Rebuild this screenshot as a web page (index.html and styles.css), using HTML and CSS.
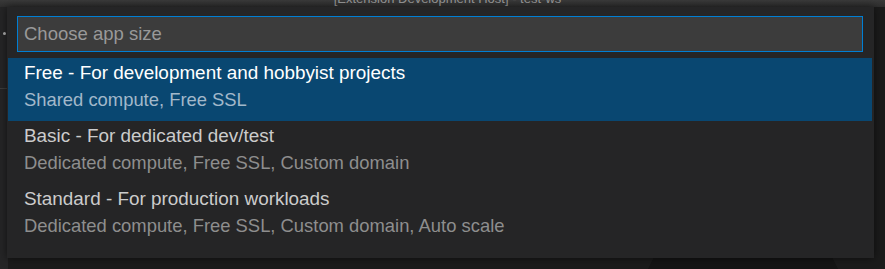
FILE: index.html
```html
<!DOCTYPE html>
<html lang="en">
<head>
    <meta charset="UTF-8">
    <meta name="viewport" content="width=device-width, initial-scale=1.0">
    <title>Choose app size</title>
    <link rel="stylesheet" href="styles.css">
</head>
<body>
    <header class="titlebar">
        <span class="title">[Extension Development Host] - test-ws</span>
    </header>
    <div class="workbench">
        <aside class="sidebar">
            <span class="dot"></span>
            <span class="sash"></span>
        </aside>
        <main class="editor">
            <div class="tab-shadow"></div>
        </main>
    </div>

    <div class="quick-input">
        <div class="input-box">
            <input type="text" placeholder="Choose app size">
        </div>
        <ul class="pick-list">
            <li class="pick selected">
                <div class="label">Free - For development and hobbyist projects</div>
                <div class="detail">Shared compute, Free SSL</div>
            </li>
            <li class="pick">
                <div class="label">Basic - For dedicated dev/test</div>
                <div class="detail">Dedicated compute, Free SSL, Custom domain</div>
            </li>
            <li class="pick">
                <div class="label">Standard - For production workloads</div>
                <div class="detail">Dedicated compute, Free SSL, Custom domain, Auto scale</div>
            </li>
        </ul>
    </div>
</body>
</html>
```

FILE: styles.css
```css
body {
    margin: 0;
    padding: 0;
    width: 885px;
    height: 269px;
    overflow: hidden;
    background-color: #1b1b1b;
    font-family: "Liberation Sans", Arial, sans-serif;
}

.titlebar {
    height: 7px;
    overflow: hidden;
    background: linear-gradient(#3a3a3a, #2e2e2e);
    display: flex;
    justify-content: center;
    align-items: flex-end;
}

.title {
    color: #9a9a9a;
    font-size: 13px;
    line-height: 13px;
    margin-bottom: 2px;
    margin-left: 10px;
}

.workbench {
    display: flex;
    height: 262px;
}

.sidebar {
    width: 8px;
    background-color: #252526;
    position: relative;
}

.sidebar .dot {
    position: absolute;
    left: 3px;
    top: 25px;
    width: 3px;
    height: 3px;
    border-radius: 50%;
    background-color: #b0b0b0;
}

.sidebar .sash {
    position: absolute;
    left: 0;
    top: 81px;
    width: 8px;
    height: 1px;
    background-color: #3c3c3c;
}

.editor {
    flex: 1;
    background-color: #1b1b1b;
    position: relative;
}

.tab-shadow {
    position: absolute;
    left: 640px;
    bottom: 0;
    width: 190px;
    height: 12px;
    background-color: #151515;
    clip-path: polygon(6px 0, 184px 0, 190px 100%, 0 100%);
}

.quick-input {
    position: absolute;
    left: 7px;
    top: 7px;
    width: 867px;
    height: 251px;
    box-sizing: border-box;
    background-color: #252526;
    box-shadow: 0 0 8px rgba(0, 0, 0, 0.55);
    padding-top: 9px;
}

.input-box {
    margin: 0 11px 0 10px;
}

.input-box input {
    display: block;
    width: 100%;
    height: 36px;
    box-sizing: border-box;
    margin: 0;
    padding: 0 6px;
    border: 1px solid #007fd4;
    background-color: #3c3c3c;
    color: #cccccc;
    font-family: "Liberation Sans", Arial, sans-serif;
    font-size: 18.5px;
    outline: none;
}

.input-box input::placeholder {
    color: #999999;
}

.pick-list {
    list-style: none;
    margin: 6px 2px 0 1px;
    padding: 0;
}

.pick {
    height: 63px;
    box-sizing: border-box;
    padding: 2px 16px 0 16px;
}

.pick .label {
    color: #cccccc;
    font-size: 18.9px;
    line-height: 26px;
    white-space: nowrap;
}

.pick .detail {
    color: #8e8e8e;
    font-size: 18.4px;
    line-height: 27px;
    white-space: nowrap;
}

.pick.selected {
    background-color: #094771;
}

.pick.selected .label {
    color: #ffffff;
}

.pick.selected .detail {
    color: #a2b8ca;
}
```
